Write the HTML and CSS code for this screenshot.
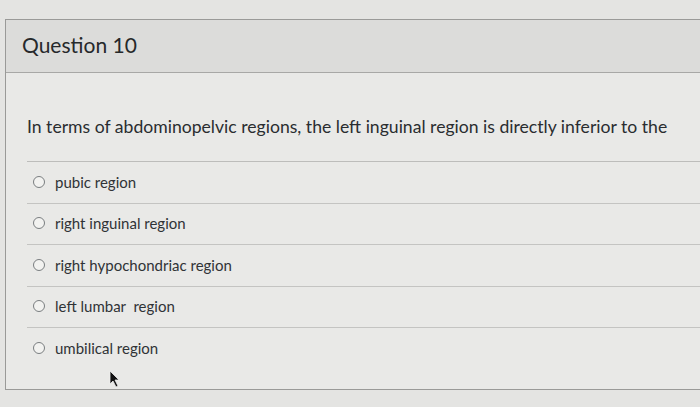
FILE: index.html
```html
<!DOCTYPE html>
<html>
<head>
<meta charset="utf-8">
<link rel="stylesheet" href="styles.css">
</head>
<body>
<div class="page">
  <div class="card">
    <div class="header">Question 10</div>
    <div class="body">
      <p class="question">In terms of abdominopelvic regions, the left inguinal region is directly inferior to the</p>
      <ul class="answers">
        <li class="answer"><span class="radio"></span><span>pubic region</span></li>
        <li class="answer"><span class="radio"></span><span>right inguinal region</span></li>
        <li class="answer"><span class="radio"></span><span>right hypochondriac region</span></li>
        <li class="answer"><span class="radio"></span><span>left lumbar&nbsp; region</span></li>
        <li class="answer"><span class="radio"></span><span>umbilical region</span></li>
      </ul>
      <svg class="cursor" width="12" height="18" viewBox="0 0 12 18"><path d="M1 1 L1 14 L4 11 L7 17 L9 16 L6 10 L10 10 Z" fill="#111" stroke="#eee" stroke-width="0.8"/></svg>
    </div>
  </div>
</div>
</body>
</html>
```
FILE: styles.css
```css
html, body {
  margin: 0;
  padding: 0;
  background: #e4e4e2;
  font-family: Lato, "Open Sans", sans-serif;
  color: #2a2d30;
}
.page {
  width: 700px;
  height: 407px;
  padding-top: 19px;
  padding-left: 5px;
  box-sizing: border-box;
  overflow: hidden;
}
.card {
  border: 1px solid #9a9a98;
  border-right: none;
  height: 371px;
  box-sizing: border-box;
  background: #e9e9e7;
}
.header {
  background: #dcdcda;
  height: 53px;
  border-bottom: 1px solid #a8a8a6;
  box-sizing: border-box;
  padding-left: 16px;
  font-size: 21px;
  line-height: 50px;
  color: #26292b;
}
.body {
  position: relative;
  padding: 0 0 0 21px;
}
.question {
  margin: 0;
  padding-top: 43px;
  font-size: 17.6px;
  line-height: 22px;
  height: 89px;
  box-sizing: border-box;
  border-bottom: 1px solid #bdbdbb;
}
.answers {
  list-style: none;
  margin: 0;
  padding: 0;
}
.answer {
  display: flex;
  align-items: center;
  gap: 10px;
  height: 41.5px;
  box-sizing: border-box;
  border-bottom: 1px solid #c4c4c2;
  padding-left: 6px;
  padding-bottom: 1px;
  font-size: 15px;
  color: #303336;
}
.answer:last-child {
  border-bottom: none;
}
.radio {
  width: 10px;
  height: 10px;
  border: 1.4px solid #7a7e80;
  border-radius: 50%;
  background: #f2f2f0;
  flex: none;
}
.cursor {
  position: absolute;
  left: 103px;
  top: 297px;
}
```
